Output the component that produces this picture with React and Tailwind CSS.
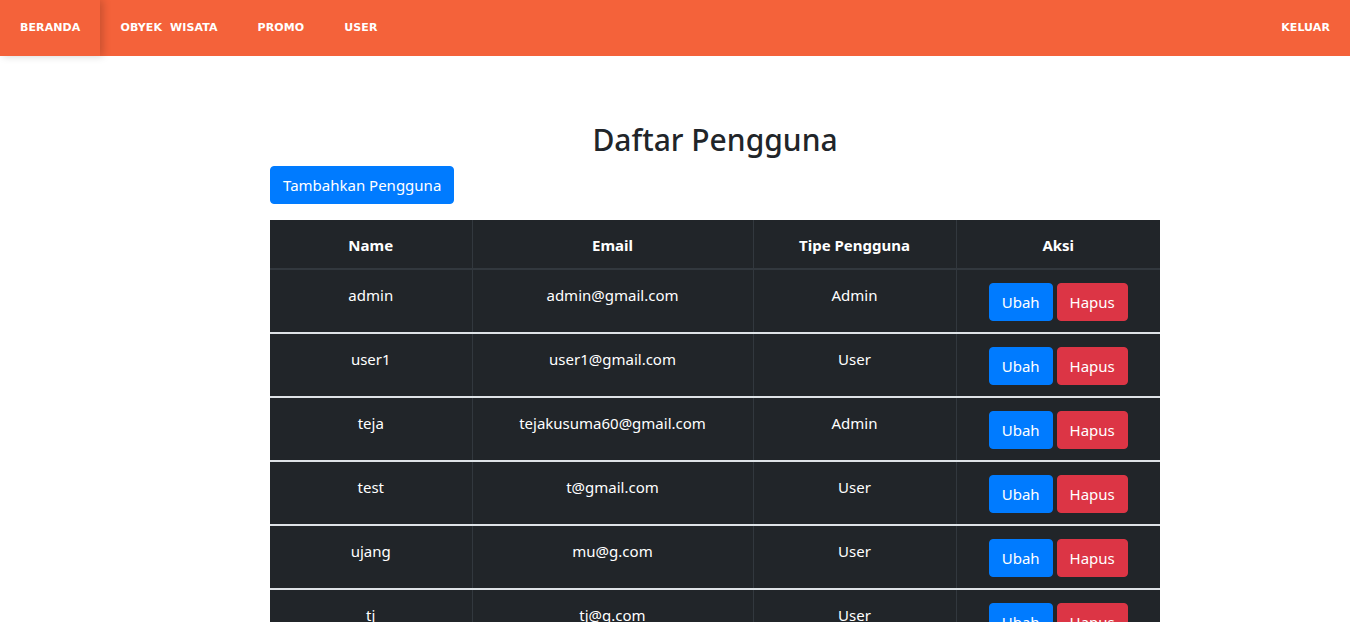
import React from 'react';

const navItems = ['BERANDA', 'OBYEK WISATA', 'PROMO', 'USER'];

const users = [
	{ name: 'admin', email: 'admin@gmail.com', type: 'Admin' },
	{ name: 'user1', email: 'user1@gmail.com', type: 'User' },
	{ name: 'teja', email: 'tejakusuma60@gmail.com', type: 'Admin' },
	{ name: 'test', email: 't@gmail.com', type: 'User' },
	{ name: 'ujang', email: 'mu@g.com', type: 'User' },
	{ name: 'tj', email: 'tj@g.com', type: 'User' },
];

const Navbar = () => (
	<nav className="flex h-14 items-stretch justify-between bg-[#f4623a] pt-px font-['DejaVu_Sans',sans-serif] text-[11px] font-bold tracking-[0.1px] text-white">
		<div className="flex items-stretch [word-spacing:4px]">
			{navItems.map((label, i) => (
				<a
					key={label}
					href="#"
					className={`relative flex items-center px-5 ${i === 0 ? 'z-10 -mt-px shadow-[3px_0_8px_rgba(0,0,0,0.18)]' : ''}`}
				>
					<span className={i === 0 ? 'pt-px' : ''}>{label}</span>
				</a>
			))}
		</div>
		<a href="#" className="flex items-center px-5">
			KELUAR
		</a>
	</nav>
);

const App = () => {
	return (
		<div className="min-h-screen bg-white font-['Noto_Sans',sans-serif] text-[15px] text-[#212529]">
			<Navbar />

			<main className="ml-[270px] w-[890px] pt-[65px]">
				<h2 className="mb-[7px] text-center text-[30px] font-medium leading-[38px]">Daftar Pengguna</h2>
				<button
					type="button"
					className="rounded border border-[#007bff] bg-[#007bff] px-3 py-[6px] leading-6 text-white"
				>
					Tambahkan Pengguna
				</button>

				<table className="mt-4 w-full table-fixed border-collapse bg-[#212529] text-center text-white">
					<colgroup>
						<col className="w-[202px]" />
						<col className="w-[281px]" />
						<col className="w-[203px]" />
						<col className="w-[204px]" />
					</colgroup>
					<thead>
						<tr className="border-b-2 border-[#32383e]">
							<th className="px-3 pt-[13px] pb-[11px] leading-6 font-bold">Name</th>
							<th className="border-l border-[#32383e] px-3 pt-[13px] pb-[11px] leading-6 font-bold">Email</th>
							<th className="border-l border-[#32383e] px-3 pt-[13px] pb-[11px] leading-6 font-bold">Tipe Pengguna</th>
							<th className="border-l border-[#32383e] px-3 pt-[13px] pb-[11px] leading-6 font-bold">Aksi</th>
						</tr>
					</thead>
					<tbody>
						{users.map((u) => (
							<tr key={u.email} className="border-b-2 border-[#dee2e6]">
								<td className="px-3 pt-[13px] pb-[11px] align-top leading-6">{u.name}</td>
								<td className="border-l border-[#32383e] px-3 pt-[13px] pb-[11px] align-top leading-6">{u.email}</td>
								<td className="border-l border-[#32383e] px-3 pt-[13px] pb-[11px] align-top leading-6">{u.type}</td>
								<td className="border-l border-[#32383e] px-3 pt-[13px] pb-[11px] align-top leading-6">
									<div className="flex justify-center gap-1">
										<button
											type="button"
											className="rounded border border-[#007bff] bg-[#007bff] px-3 py-[6px] leading-6 text-white"
										>
											Ubah
										</button>
										<button
											type="button"
											className="rounded border border-[#dc3545] bg-[#dc3545] px-3 py-[6px] leading-6 text-white"
										>
											Hapus
										</button>
									</div>
								</td>
							</tr>
						))}
					</tbody>
				</table>
			</main>
		</div>
	);
};

export default App;
